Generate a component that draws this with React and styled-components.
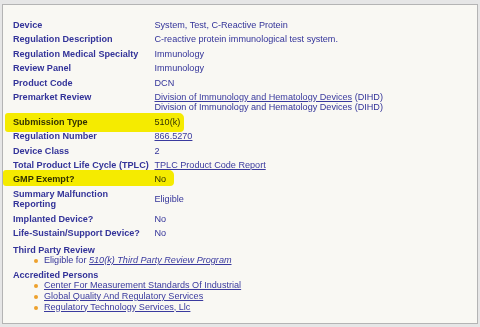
import React from "react";
import styled, { createGlobalStyle } from "styled-components";

const Global = createGlobalStyle`
  html, body {
    margin: 0;
    padding: 0;
    background: #e6e6e6;
  }
  body {
    font-family: "Liberation Sans", Arial, sans-serif;
    font-size: 9.1px;
    color: #333399;
  }
`;

const Panel = styled.div`
  margin: 4px 2px 0 2px;
  height: 320px;
  border: 1px solid #b4b4b4;
  background: #f9f8f3;
  padding: 13px 10px 0 10px;
  box-sizing: border-box;
`;

const Row = styled.div`
  position: relative;
  display: grid;
  grid-template-columns: 141.5px 1fr;
  padding: 2px 0;
  line-height: 10.4px;
`;

const Label = styled.div`
  font-weight: bold;
  align-self: start;
`;

const Value = styled.div`
  align-self: center;
`;

const Link = styled.a`
  color: #3a3a9e;
  text-decoration: underline;
  font-style: ${(p) => (p.$italic ? "italic" : "normal")};
  cursor: pointer;
`;

const Marker = styled.span`
  position: absolute;
  left: ${(p) => p.$left}px;
  top: ${(p) => p.$top}px;
  width: ${(p) => p.$width}px;
  height: ${(p) => p.$height}px;
  background: #fbf200;
  mix-blend-mode: multiply;
  border-radius: 3px 5px 4px 3px;
  filter: blur(0.6px);
  pointer-events: none;
`;

const Section = styled.div`
  padding-top: 2px;
  line-height: 10.7px;
`;

const Heading = styled.div`
  font-weight: bold;
  line-height: 10.5px;
  padding-top: 2px;
`;

const List = styled.ul`
  margin: 0;
  padding: 0 0 0 31px;
  list-style: none;
`;

const Item = styled.li`
  position: relative;
  line-height: 10.7px;
  &::before {
    content: "";
    position: absolute;
    left: -10px;
    top: 4px;
    width: 4px;
    height: 4px;
    border-radius: 50%;
    background: #eea12c;
  }
`;

const rows = [
  { label: "Device", value: "System, Test, C-Reactive Protein" },
  { label: "Regulation Description", value: "C-reactive protein immunological test system." },
  { label: "Regulation Medical Specialty", value: "Immunology" },
  { label: "Review Panel", value: "Immunology" },
  { label: "Product Code", value: "DCN" },
];

export default function App() {
  return (
    <>
      <Global />
      <Panel>
        {rows.map((r) => (
          <Row key={r.label}>
            <Label>{r.label}</Label>
            <Value>{r.value}</Value>
          </Row>
        ))}
        <Row>
          <Label>Premarket Review</Label>
          <Value>
            <div>
              <Link>Division of Immunology and Hematology Devices</Link> (DIHD)
            </div>
            <div>Division of Immunology and Hematology Devices (DIHD)</div>
          </Value>
        </Row>
        <Row>
          <Marker $left={-8} $top={-2} $width={179} $height={19} />
          <Label>Submission Type</Label>
          <Value>510(k)</Value>
        </Row>
        <Row>
          <Label>Regulation Number</Label>
          <Value>
            <Link>866.5270</Link>
          </Value>
        </Row>
        <Row>
          <Label>Device Class</Label>
          <Value>2</Value>
        </Row>
        <Row>
          <Label>Total Product Life Cycle (TPLC)</Label>
          <Value>
            <Link>TPLC Product Code Report</Link>
          </Value>
        </Row>
        <Row>
          <Marker $left={-10} $top={-2} $width={171} $height={16} />
          <Label>GMP Exempt?</Label>
          <Value>No</Value>
        </Row>
        <Row>
          <Label>
            Summary Malfunction
            <br />
            Reporting
          </Label>
          <Value>Eligible</Value>
        </Row>
        <Row>
          <Label>Implanted Device?</Label>
          <Value>No</Value>
        </Row>
        <Row>
          <Label>Life-Sustain/Support Device?</Label>
          <Value>No</Value>
        </Row>
        <Section>
          <Heading>Third Party Review</Heading>
          <List>
            <Item>
              Eligible for <Link $italic>510(k) Third Party Review Program</Link>
            </Item>
          </List>
        </Section>
        <Section>
          <Heading>Accredited Persons</Heading>
          <List>
            <Item>
              <Link>Center For Measurement Standards Of Industrial</Link>
            </Item>
            <Item>
              <Link>Global Quality And Regulatory Services</Link>
            </Item>
            <Item>
              <Link>Regulatory Technology Services, Llc</Link>
            </Item>
          </List>
        </Section>
      </Panel>
    </>
  );
}
